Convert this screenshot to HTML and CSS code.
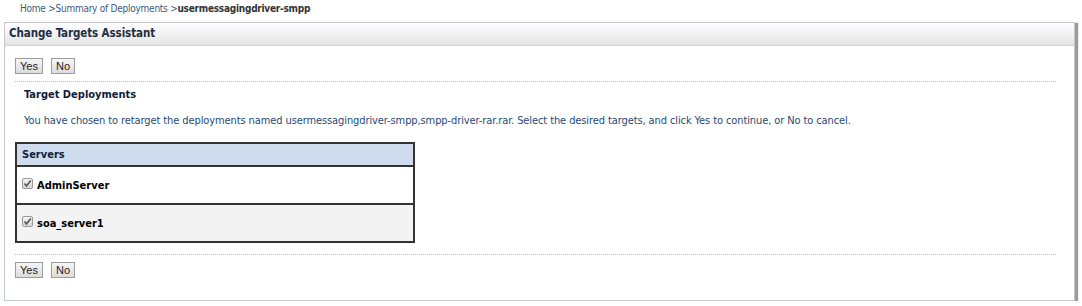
FILE: index.html
```html
<!DOCTYPE html>
<html>
<head>
<meta charset="utf-8">
<link rel="stylesheet" href="styles.css">
</head>
<body>
<div class="crumbs"><span class="crumb">Home &gt;</span><span class="crumb">Summary of Deployments &gt;</span><b class="crumb-cur">usermessagingdriver-smpp</b></div>
<div class="panel">
  <div class="panel-head">Change Targets Assistant</div>
  <div class="panel-body">
    <div class="btns"><button class="btn">Yes</button><button class="btn">No</button></div>
    <div class="sep"></div>
    <div class="section">
      <h3 class="sec-title">Target Deployments</h3>
      <p class="desc">You have chosen to retarget the deployments named usermessagingdriver-smpp,smpp-driver-rar.rar. Select the desired targets, and click Yes to continue, or No to cancel.</p>
    </div>
    <table class="servers">
      <thead><tr><th>Servers</th></tr></thead>
      <tbody>
        <tr class="row"><td><label class="srv"><span class="chk"><svg width="9" height="9" viewBox="0 0 9 9"><path d="M1.5 4.5 L3.5 7 L7.8 1.5" fill="none" stroke="#555" stroke-width="1.7"/></svg></span>AdminServer</label></td></tr>
        <tr class="row alt"><td><label class="srv"><span class="chk"><svg width="9" height="9" viewBox="0 0 9 9"><path d="M1.5 4.5 L3.5 7 L7.8 1.5" fill="none" stroke="#555" stroke-width="1.7"/></svg></span>soa_server1</label></td></tr>
      </tbody>
    </table>
    <div class="sep sep2"></div>
    <div class="btns"><button class="btn">Yes</button><button class="btn">No</button></div>
  </div>
</div>
</body>
</html>
```
FILE: styles.css
```css
html, body { margin: 0; padding: 0; background: #fff; }
body { font-family: "DejaVu Sans Condensed", "DejaVu Sans", sans-serif; font-size: 11px; color: #000; }
.crumbs { height: 22px; padding-left: 20px; line-height: 18px; font-size: 10px; letter-spacing: -0.25px; }
.crumb { color: #3e5a76; }
.crumb-cur { color: #333; font-weight: bold; }
.panel { margin-left: 4px; width: 1071px; height: 279px; border: 1px solid #c4c8cc; box-shadow: 2px 2px 1px 1px #9a9a9a; box-sizing: border-box; }
.panel-head { height: 22px; line-height: 21px; padding-left: 4px; font-weight: bold; font-size: 11.5px; letter-spacing: -0.1px; color: #1f2d42; background: linear-gradient(#ffffff, #e4e4e4); border-bottom: 1px solid #d4d4d4; }
.panel-body { padding: 12px 10px 0 10px; }
.btns { display: flex; gap: 8px; height: 16px; }
.btn { font-family: "Liberation Sans", Arial, sans-serif; font-size: 11px; height: 16px; padding: 0 4px; border: 1px solid #9c9c9c; background: linear-gradient(#f6f6f6, #dcdcdc); color: #222; line-height: 13px; margin: 0; }
.sep { border-top: 1px dotted #bdbdbd; margin: 7px 8px 0 0; }
.section { padding: 0 9px; }
.sec-title { margin: 5px 0 0; font-size: 11px; font-weight: bold; color: #10203a; line-height: 16px; }
.desc { margin: 10px 0 0; color: #1f4a75; line-height: 16px; letter-spacing: -0.1px; }
.servers { margin-top: 13px; width: 400px; border-collapse: collapse; border: 2px solid #333; }
.servers th { height: 21px; background: #cfdcee; text-align: left; padding: 0 5px; font-size: 11px; color: #10203a; border-bottom: 2px solid #333; }
.row td { height: 36px; padding: 0 5px; border-top: 2px solid #333; }
.row.alt td { background: #f3f3f3; }
.srv { display: flex; align-items: center; gap: 4px; font-weight: bold; color: #000; }
.chk { width: 11px; height: 11px; border: 1px solid #9a9a9a; border-radius: 2px; background: linear-gradient(#f4f4f4, #d8d8d8); box-sizing: border-box; display: flex; align-items: center; justify-content: center; margin-top: -4px; }
.sep2 { margin-top: 11px; margin-bottom: 7px; }
```
